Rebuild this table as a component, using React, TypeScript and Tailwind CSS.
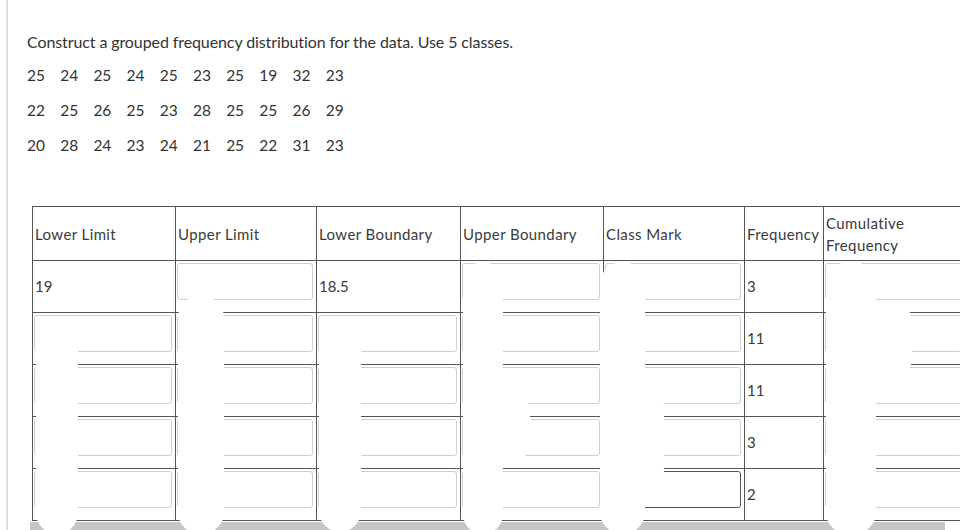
import React from "react";

const rows = [
  ["25", "24", "25", "24", "25", "23", "25", "19", "32", "23"],
  ["22", "25", "26", "25", "23", "28", "25", "25", "26", "29"],
  ["20", "28", "24", "23", "24", "21", "25", "22", "31", "23"],
];

const headers = [
  "Lower Limit",
  "Upper Limit",
  "Lower Boundary",
  "Upper Boundary",
  "Class Mark",
  "Frequency",
  "Cumulative Frequency",
];

type Cell = { text?: string; focus?: boolean };

const table: Cell[][] = [
  [{ text: "19" }, {}, { text: "18.5" }, {}, {}, { text: "3" }, {}],
  [{}, {}, {}, {}, {}, { text: "11" }, {}],
  [{}, {}, {}, {}, {}, { text: "11" }, {}],
  [{}, {}, {}, {}, {}, { text: "3" }, {}],
  [{}, {}, {}, {}, { focus: true }, { text: "2" }, {}],
];

const blobs = [
  { l: 36, t: 322, w: 42, h: 212 },
  { l: 178, t: 296, w: 46, h: 238 },
  { l: 319, t: 322, w: 42, h: 210 },
  { l: 463, t: 262, w: 40, h: 272 },
  { l: 492, t: 392, w: 38, h: 70 },
  { l: 600, t: 262, w: 45, h: 272 },
  { l: 628, t: 388, w: 36, h: 100 },
  { l: 826, t: 262, w: 50, h: 272 },
  { l: 858, t: 300, w: 54, h: 80 },
];

export default function App() {
  return (
    <div className="relative w-[960px] h-[530px] overflow-hidden bg-white font-['Lato',sans-serif] text-[#333]">
      <div className="ml-[6px] h-full border-l-2 border-[#dcdcdc] pl-[19px]">
        <div className="pt-[32px] text-[16px] leading-[20px] tracking-[-0.1px] whitespace-nowrap">
          Construct a grouped frequency distribution for the data. Use 5 classes.
        </div>
        <div className="mt-[13px] flex flex-col gap-[15px] text-[15.5px] leading-[20px]">
          {rows.map((r, i) => (
            <div key={i} className="flex">
              {r.map((n, j) => (
                <span key={j} className="w-[33.2px] shrink-0">
                  {n}
                </span>
              ))}
            </div>
          ))}
        </div>
        <div className="mt-[51px] ml-[5px] w-[934px] border-l border-t border-[#555] text-[15px] tracking-[0.4px] text-[#3a3a3a]">
          <div className="grid grid-cols-[143px_141px_144px_143px_141px_79px_142px]">
            {headers.map((h, i) => (
              <div
                key={i}
                className="h-[54px] border-r border-b border-[#555] pl-[2px] flex items-center leading-[22px] whitespace-nowrap"
              >
                {i === 6 ? (
                  <span>
                    Cumulative
                    <br />
                    Frequency
                  </span>
                ) : (
                  <span>{h}</span>
                )}
              </div>
            ))}
          </div>
          {table.map((r, i) => (
            <div key={i} className="grid grid-cols-[143px_141px_144px_143px_141px_79px_142px]">
              {r.map((c, j) => (
                <div key={j} className="h-[52px] border-r border-b border-[#555]">
                  {c.text !== undefined ? (
                    <div className="h-full pl-[2px] flex items-center text-[15px] tracking-normal">{c.text}</div>
                  ) : (
                    <div
                      className={
                        c.focus
                          ? "mt-[2px] ml-[1px] mr-[3px] h-[37px] rounded-[3px] border border-[#555]"
                          : "mt-[2px] ml-[1px] mr-[3px] h-[37px] rounded-[3px] border border-[#cfcfcf]"
                      }
                    />
                  )}
                </div>
              ))}
            </div>
          ))}
        </div>
        <div className="mt-[1px] ml-[3px] w-[915px] h-[8px] bg-[#c6c6c6]" />
      </div>
      {blobs.map((b, i) => (
        <div
          key={i}
          className="absolute bg-white rounded-[22px]"
          style={{ left: b.l, top: b.t, width: b.w, height: b.h }}
        />
      ))}
    </div>
  );
}
